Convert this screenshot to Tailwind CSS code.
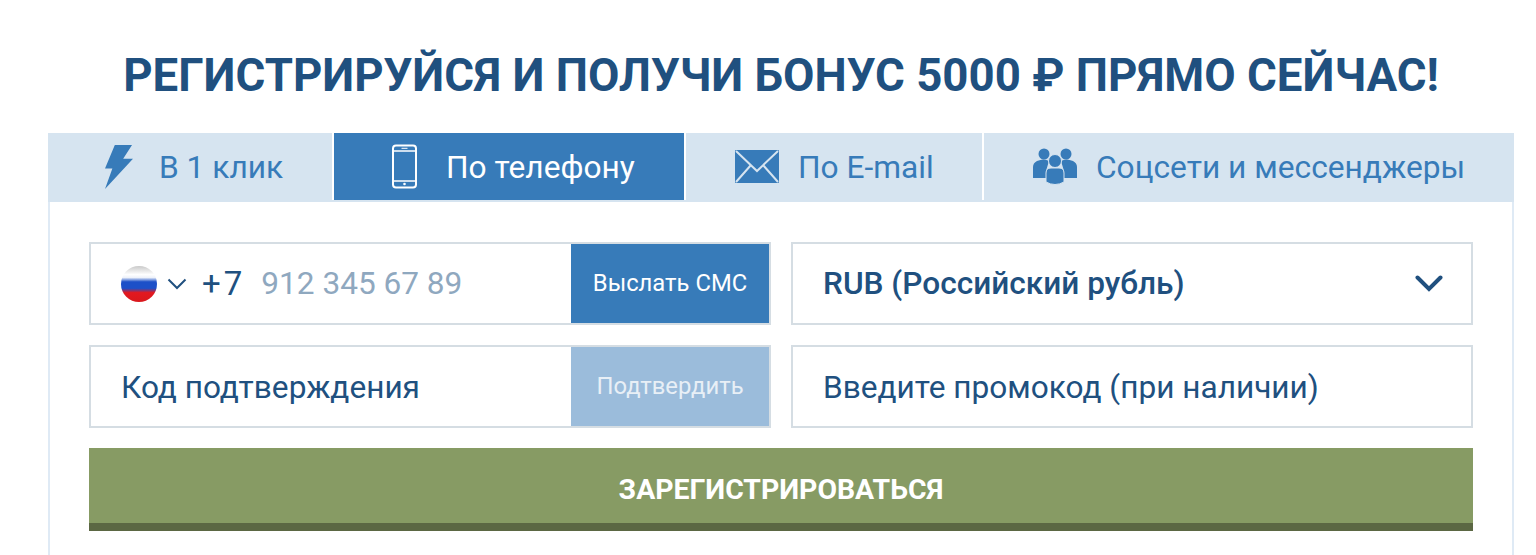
<!DOCTYPE html>
<html lang="ru">

<head>
    <meta charset="UTF-8">
    <title>Регистрация</title>
    <script src="https://cdn.jsdelivr.net/npm/@tailwindcss/browser@4"></script>
</head>

<body class="bg-white h-[555px] overflow-hidden font-['Roboto',sans-serif] text-[#20507f]">
    <div class="pl-[48px] pr-[22px]">
        <h1 class="h-[133px] pt-[47px] text-center font-bold text-[45.6px] leading-[58px] whitespace-nowrap">
            РЕГИСТРИРУЙСЯ И ПОЛУЧИ БОНУС 5000 ₽ ПРЯМО СЕЙЧАС!
        </h1>

        <!-- tabs -->
        <div class="flex h-[69px] bg-[#d6e4f0] text-[31.7px] text-[#377bb9]">
            <div class="w-[284px] h-[67px] flex items-center pl-[57px] gap-[26px]">
                <svg width="28" height="44" viewBox="0 0 57 128" preserveAspectRatio="none" fill="#377bb9">
                    <path d="M20 0H55L37 40H57L0 128L15 68H0Z" />
                </svg>
                <span class="pt-[3px]">В 1 клик</span>
            </div>
            <div class="w-[2px] h-[67px] bg-white"></div>
            <div class="w-[350px] h-[67px] bg-[#377bb9] text-white flex items-center pl-[57px] gap-[28px]">
                <svg width="27" height="45" viewBox="0 0 26 45" fill="none" stroke="#fff">
                    <rect x="1.500" y="1.500" width="23" height="42" rx="3" stroke-width="2" />
                    <path d="M2 7h22M2 37h22" stroke-width="1.500" />
                    <path d="M10 4.300h6" stroke-width="1" />
                    <circle cx="13" cy="40" r="1.300" fill="#fff" stroke="none" />
                </svg>
                <span class="pt-[3px]">По телефону</span>
            </div>
            <div class="w-[2px] h-[67px] bg-white"></div>
            <div class="w-[296px] h-[67px] flex items-center pl-[49px] gap-[19px]">
                <svg width="44" height="33" viewBox="0 0 44 33">
                    <rect width="44" height="33" rx="1" fill="#377bb9" />
                    <path d="M1 1l21 20L43 1M1 32l15-17M43 32L28 15" fill="none" stroke="#d6e4f0" stroke-width="2" />
                </svg>
                <span class="pt-[3px]">По E-mail</span>
            </div>
            <div class="w-[2px] h-[67px] bg-white"></div>
            <div class="flex-1 h-[67px] flex items-center pl-[49px] gap-[19px]">
                <svg width="44" height="37" viewBox="0 0 44 37" fill="#377bb9">
                    <circle cx="11" cy="6" r="5.500" />
                    <circle cx="33" cy="6" r="5.500" />
                    <path d="M4 13q7-3 12 0l-3 10v7H0V19q0-4 4-6zM40 13q-7-3-12 0l3 10v7h13V19q0-4-4-6z" />
                    <circle cx="22" cy="13" r="6.500" stroke="#d6e4f0" />
                    <path d="M13 25q0-5 5-5h8q5 0 5 5v9q-9 5-18 0z" stroke="#d6e4f0" />
                </svg>
                <span class="pt-[3px]">Соцсети и мессенджеры</span>
            </div>
        </div>

        <!-- form -->
        <div class="border-x-2 border-[#dfeaf5] h-[353px] pt-[40px] px-[39px]">
            <div class="grid grid-cols-2 gap-[20px] text-[31.6px]">
                <div class="h-[83px] border-2 border-[#d5dde3] flex items-center">
                    <div class="flex-1 flex items-center pl-[30px]">
                        <div class="w-[36px] h-[36px] rounded-full blur-[0.5px] bg-[linear-gradient(#c9c9c9_0%,#fff_24%,#eef2fa_32%,#1d50c8_44%,#1d50c8_62%,#e3191f_74%,#d9181d_100%)]"></div>
                        <svg class="ml-[10px]" width="20" height="12" viewBox="0 0 20 12" fill="none" stroke="#20507f" stroke-width="2">
                            <path d="M1.500 1.500l8.500 8.500 8.500-8.500" />
                        </svg>
                        <span class="ml-[15px] pt-[1px] text-[33px] tracking-[3px]">+7</span>
                        <span class="ml-[16px] pt-[1px] text-[#8fa8bf]">912 345 67 89</span>
                    </div>
                    <div class="w-[198px] h-full bg-[#377bb9] text-white text-[23.8px] flex items-center justify-center">Выслать СМС</div>
                </div>
                <div class="h-[83px] border-2 border-[#d5dde3] flex items-center justify-between pl-[30px] pr-[28px]">
                    <span class="pt-[1px] font-medium">RUB (Российский рубль)</span>
                    <svg width="28" height="17" viewBox="0 0 28 17" fill="none" stroke="#20507f" stroke-width="4" stroke-linecap="round">
                        <path d="M2.500 2.500l11.500 11.500L25.500 2.500" />
                    </svg>
                </div>
                <div class="h-[83px] border-2 border-[#d5dde3] flex items-center">
                    <div class="flex-1 pl-[30px] pt-[2px]">Код подтверждения</div>
                    <div class="w-[198px] h-full bg-[#9bbcdb] text-[#e8eff6] text-[23.8px] flex items-center justify-center">Подтвердить</div>
                </div>
                <div class="h-[83px] border-2 border-[#d5dde3] flex items-center pl-[30px] pt-[2px]">Введите промокод (при наличии)</div>
            </div>
            <button class="mt-[20px] w-full h-[83px] pt-[10px] bg-[#879b64] border-b-8 border-[#5b6743] text-white font-bold text-[28.4px]">ЗАРЕГИСТРИРОВАТЬСЯ</button>
        </div>
    </div>
</body>

</html>
